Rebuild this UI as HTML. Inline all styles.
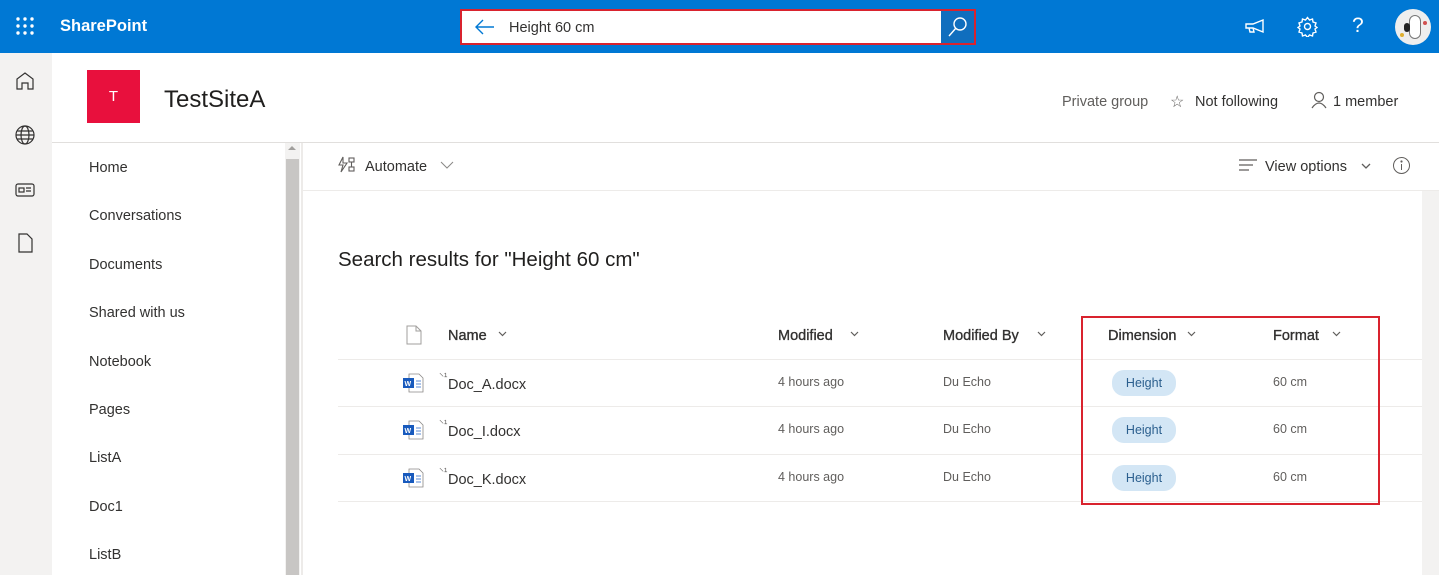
<!DOCTYPE html>
<html><head><meta charset="utf-8"><style>
*{margin:0;padding:0;box-sizing:border-box}
body{width:1439px;height:575px;overflow:hidden;font-family:"Liberation Sans",sans-serif;color:#323130;background:#fff;position:relative}
.a{position:absolute;white-space:nowrap}
.top{left:0;top:0;width:1439px;height:53px;background:#0078d4}
.rail{left:0;top:53px;width:52px;height:522px;background:#f3f2f1}
.nav div{position:absolute;left:89px;font-size:14.5px;color:#323130;white-space:nowrap}
.hd{font-size:14.5px;color:#323130;-webkit-text-stroke:0.35px #323130}
.sm{font-size:12.5px;color:#605e5c}
.pill{background:#d3e6f5;color:#2b5f8e;border-radius:12px;font-size:12.5px;width:64px;height:26px;line-height:26px;text-align:center}
.row{left:338px;width:1084px;height:1px;background:#edebe9}
</style></head><body>
<div class="a top"></div>
<svg class="a" style="left:16px;top:17px" width="19" height="19" fill="#fff"><g><circle cx="2" cy="2" r="1.7"/><circle cx="9" cy="2" r="1.7"/><circle cx="16" cy="2" r="1.7"/><circle cx="2" cy="9" r="1.7"/><circle cx="9" cy="9" r="1.7"/><circle cx="16" cy="9" r="1.7"/><circle cx="2" cy="16" r="1.7"/><circle cx="9" cy="16" r="1.7"/><circle cx="16" cy="16" r="1.7"/></g></svg>
<div class="a" style="left:60px;top:17px;color:#fff;font-weight:bold;font-size:16.5px">SharePoint</div>
<div class="a" style="left:460px;top:9px;width:516px;height:36px;border:2px solid #d9232e;background:#fff"></div>
<div class="a" style="left:941px;top:11px;width:33px;height:32px;background:#106ebe"></div>
<svg class="a" style="left:946px;top:14px" width="24" height="26" fill="none" stroke="#fff" stroke-width="1.4"><circle cx="14" cy="10" r="6"/><path d="M10 14 L3 22"/></svg>
<svg class="a" style="left:474px;top:17px" width="22" height="20" fill="none" stroke="#0078d4" stroke-width="1.4"><path d="M2 10 H20 M9 3 L2 10 L9 17"/></svg>
<div class="a" style="left:509px;top:20px;font-size:14.5px;color:#323130">Height 60 cm</div>
<svg class="a" style="left:1243px;top:17px" width="24" height="20" fill="none" stroke="#fff" stroke-width="1.4"><path d="M3 7 H10 L20 3 V15 L10 11 H3 Z M6 11 L7 15 H11 L10 11"/></svg>
<svg class="a" style="left:1297px;top:16px" width="21" height="21" fill="none" stroke="#fff" stroke-width="1.4"><circle cx="10.5" cy="10.5" r="3"/><path d="M10.5 1.5 l2 2.5 3-1 .5 3 3 1-1 3 2 1.5-2 1.5 1 3-3 1-.5 3-3-1-2 2.5-2-2.5-3 1-.5-3-3-1 1-3-2-1.5 2-1.5-1-3 3-1 .5-3 3 1z"/></svg>
<div class="a" style="left:1352px;top:14px;color:#fff;font-size:21px">?</div>
<div class="a" style="left:1395px;top:9px;width:36px;height:36px;border-radius:50%;background:#eee;overflow:hidden"><div style="position:absolute;left:14px;top:6px;width:12px;height:24px;background:#fff;border:1px solid #777;border-radius:6px"></div><div style="position:absolute;left:9px;top:14px;width:6px;height:9px;background:#222;border-radius:3px"></div><div style="position:absolute;left:5px;top:24px;width:4px;height:4px;background:#e0b030;border-radius:50%"></div><div style="position:absolute;left:28px;top:12px;width:4px;height:4px;background:#d05050;border-radius:50%"></div></div>
<div class="a rail"></div>
<svg class="a" style="left:14px;top:70px" width="22" height="190" fill="none" stroke="#323130" stroke-width="1.2"><path d="M3 19 V9 L11 3 L19 9 V19 H14 V13 H8 V19 Z"/><g transform="translate(0,55)"><circle cx="11" cy="10" r="9"/><ellipse cx="11" cy="10" rx="4" ry="9"/><path d="M2 10 H20 M3.5 6 H18.5 M3.5 14 H18.5"/></g><g transform="translate(0,110)"><rect x="2" y="4" width="18" height="12" rx="2"/><rect x="5" y="8" width="5" height="4"/><path d="M12 8 H17 M12 11 H17"/></g><g transform="translate(0,162)"><path d="M5 2 H13 L18 7 V20 H5 Z"/></g></svg>
<div class="a" style="left:87px;top:70px;width:53px;height:53px;background:#e8103d;color:#fff;font-size:15px;text-align:center;line-height:53px">T</div>
<div class="a" style="left:164px;top:86px;font-size:24px;color:#201f1e">TestSiteA</div>
<div class="a" style="left:1062px;top:94px;font-size:14.5px;color:#605e5c">Private group</div>
<div class="a" style="left:1170px;top:92px;font-size:16px;color:#605e5c">☆</div>
<div class="a" style="left:1195px;top:94px;font-size:14.5px;color:#323130">Not following</div>
<svg class="a" style="left:1311px;top:91px" width="16" height="18" fill="none" stroke="#605e5c" stroke-width="1.2"><circle cx="8" cy="6" r="4.5"/><path d="M1 17 Q8 7 15 17"/></svg>
<div class="a" style="left:1333px;top:94px;font-size:14.5px;color:#323130">1 member</div>
<div class="a" style="left:52px;top:142px;width:1387px;height:1px;background:#e1dfdd"></div>
<div class="nav">
<div style="top:160px">Home</div><div style="top:208px">Conversations</div><div style="top:257px">Documents</div><div style="top:305px">Shared with us</div><div style="top:354px">Notebook</div><div style="top:402px">Pages</div><div style="top:450px">ListA</div><div style="top:499px">Doc1</div><div style="top:547px">ListB</div>
</div>
<div class="a" style="left:285px;top:143px;width:15px;height:432px;background:#f3f2f1"></div>
<div class="a" style="left:286px;top:159px;width:13px;height:416px;background:#c8c6c4"></div>
<div class="a" style="left:288px;top:146px;width:0;height:0;border-left:4px solid transparent;border-right:4px solid transparent;border-bottom:4px solid #a19f9d"></div>
<div class="a" style="left:301px;top:143px;width:2px;height:432px;background:#edebe9"></div>
<svg class="a" style="left:337px;top:156px" width="20" height="18" fill="none" stroke="#605e5c" stroke-width="1.1"><path d="M6 1 L2 9 H6 L4 16 L10 7 H6 Z"/><rect x="12" y="2" width="5" height="4"/><rect x="12" y="11" width="5" height="4"/><path d="M14.5 6 V11"/></svg>
<div class="a" style="left:365px;top:159px;font-size:14.5px">Automate</div>
<svg class="a" style="left:440px;top:160px" width="14" height="10" fill="none" stroke="#8a8886"><path d="M1 2 L7 8 L13 2"/></svg>
<svg class="a" style="left:1238px;top:158px" width="20" height="14" stroke="#605e5c" stroke-width="1.2"><path d="M1 2 H19 M1 7 H15 M1 12 H11"/></svg>
<div class="a" style="left:1265px;top:159px;font-size:14.5px">View options</div>
<svg class="a" style="left:1361px;top:162px" width="10" height="8" fill="none" stroke="#605e5c" stroke-width="1.3"><path d="M1 2 L5 6 L9 2"/></svg>
<svg class="a" style="left:1392px;top:156px" width="19" height="19" fill="none" stroke="#605e5c"><circle cx="9.5" cy="9.5" r="8"/><path d="M9.5 8 V14"/><circle cx="9.5" cy="5.5" r=".6" fill="#605e5c"/></svg>
<div class="a" style="left:303px;top:190px;width:1136px;height:1px;background:#edebe9"></div>
<div class="a" style="left:1422px;top:191px;width:17px;height:384px;background:#f3f2f1"></div>
<div class="a" style="left:338px;top:248px;font-size:20.5px;color:#201f1e">Search results for "Height 60 cm"</div>
<svg class="a" style="left:405px;top:325px" width="18" height="20" fill="none" stroke="#a19f9d"><path d="M2 1 H11 L16 6 V19 H2 Z M11 1 V6 H16"/></svg>
<div class="a hd" style="left:448px;top:328px">Name</div>
<div class="a hd" style="left:778px;top:328px">Modified</div>
<div class="a hd" style="left:943px;top:328px">Modified By</div>
<div class="a hd" style="left:1108px;top:328px">Dimension</div>
<div class="a hd" style="left:1273px;top:328px">Format</div>
<svg class="a" style="left:498px;top:331px" width="880" height="8" fill="none" stroke="#605e5c" stroke-width="1.2"><path d="M1 1 L4.5 4.5 L8 1"/><path transform="translate(352,0)" d="M1 1 L4.5 4.5 L8 1"/><path transform="translate(539,0)" d="M1 1 L4.5 4.5 L8 1"/><path transform="translate(689,0)" d="M1 1 L4.5 4.5 L8 1"/><path transform="translate(834,0)" d="M1 1 L4.5 4.5 L8 1"/></svg>
<div class="a row" style="top:359px"></div>
<div class="a row" style="top:406px"></div>
<div class="a row" style="top:454px"></div>
<div class="a row" style="top:501px"></div>
<div class="a" style="left:1081px;top:316px;width:299px;height:189px;border:2px solid #d9232e"></div>
<div style="position:absolute;left:0;top:0">
<svg class="a" style="left:402px;top:373px" width="22" height="20"><path d="M7 1 H17 L21 5 V19 H7 Z" fill="#fff" stroke="#8a8886" stroke-width=".8"/><rect x="1" y="5" width="11" height="10" fill="#185abd"/><text x="2.5" y="13" font-size="7" font-family="Liberation Sans" font-weight="bold" fill="#fff">W</text><path d="M14 8 H19 M14 11 H19 M14 14 H19" stroke="#5b8bd6"/></svg>
<div class="a" style="left:439px;top:369px;font-size:10px;color:#605e5c">⸌¹</div>
<div class="a" style="left:448px;top:377px;font-size:14.5px">Doc_A.docx</div>
<div class="a sm" style="left:778px;top:375px">4 hours ago</div>
<div class="a sm" style="left:943px;top:375px">Du Echo</div>
<div class="a pill" style="left:1112px;top:370px">Height</div>
<div class="a sm" style="left:1273px;top:375px">60 cm</div>
</div>
<div style="position:absolute;left:0;top:47px">
<svg class="a" style="left:402px;top:373px" width="22" height="20"><path d="M7 1 H17 L21 5 V19 H7 Z" fill="#fff" stroke="#8a8886" stroke-width=".8"/><rect x="1" y="5" width="11" height="10" fill="#185abd"/><text x="2.5" y="13" font-size="7" font-family="Liberation Sans" font-weight="bold" fill="#fff">W</text><path d="M14 8 H19 M14 11 H19 M14 14 H19" stroke="#5b8bd6"/></svg>
<div class="a" style="left:439px;top:369px;font-size:10px;color:#605e5c">⸌¹</div>
<div class="a" style="left:448px;top:377px;font-size:14.5px">Doc_I.docx</div>
<div class="a sm" style="left:778px;top:375px">4 hours ago</div>
<div class="a sm" style="left:943px;top:375px">Du Echo</div>
<div class="a pill" style="left:1112px;top:370px">Height</div>
<div class="a sm" style="left:1273px;top:375px">60 cm</div>
</div>
<div style="position:absolute;left:0;top:95px">
<svg class="a" style="left:402px;top:373px" width="22" height="20"><path d="M7 1 H17 L21 5 V19 H7 Z" fill="#fff" stroke="#8a8886" stroke-width=".8"/><rect x="1" y="5" width="11" height="10" fill="#185abd"/><text x="2.5" y="13" font-size="7" font-family="Liberation Sans" font-weight="bold" fill="#fff">W</text><path d="M14 8 H19 M14 11 H19 M14 14 H19" stroke="#5b8bd6"/></svg>
<div class="a" style="left:439px;top:369px;font-size:10px;color:#605e5c">⸌¹</div>
<div class="a" style="left:448px;top:377px;font-size:14.5px">Doc_K.docx</div>
<div class="a sm" style="left:778px;top:375px">4 hours ago</div>
<div class="a sm" style="left:943px;top:375px">Du Echo</div>
<div class="a pill" style="left:1112px;top:370px">Height</div>
<div class="a sm" style="left:1273px;top:375px">60 cm</div>
</div>
</body></html>
